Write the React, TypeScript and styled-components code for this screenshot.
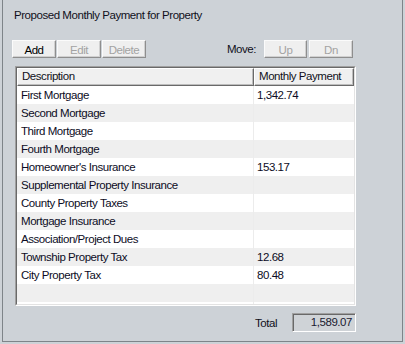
import React from "react";
import styled, { createGlobalStyle } from "styled-components";

const Global = createGlobalStyle`
  html, body { margin: 0; padding: 0; background: #cdd2d7; }
  body { font-family: "Liberation Sans", Arial, sans-serif; font-size: 11.5px; letter-spacing: -0.45px; color: #111; }
  * { box-sizing: border-box; }
`;

const Frame = styled.div`
  margin-left: 2px;
  width: 401px;
  height: 342px;
  border: 1px solid #7e8489;
  border-top: none;
  background: #cdd2d7;
  padding-left: 9px;
  display: flex;
  flex-direction: column;
`;

const Title = styled.div`
  margin-top: 8px;
  padding-left: 2px;
  line-height: 14px;
  color: #101020;
`;

const Toolbar = styled.div`
  margin-top: 18px;
  width: 341px;
  display: flex;
  justify-content: space-between;
  align-items: center;
`;

const Group = styled.div<{ $gap: number }>`
  display: flex;
  align-items: center;
  gap: ${(p) => p.$gap}px;
`;

const Button = styled.button<{ $w?: number }>`
  width: ${(p) => p.$w ?? 44}px;
  height: 18px;
  padding: 1px 0 0;
  margin: 0;
  font: inherit;
  letter-spacing: inherit;
  background: #efefef;
  border: 1px solid;
  border-color: #fbfbfb #8e8e8e #8e8e8e #fbfbfb;
  box-shadow: inset -1px -1px 0 #d0d0d0;
  color: ${(p) => (p.disabled ? "#a3a3a3" : "#000")};
  line-height: 14px;
`;

const MoveLabel = styled.span`
  color: #101020;
  margin-right: 6px;
`;

const TableOuter = styled.div`
  margin-top: 8px;
  margin-left: 3px;
  width: 341px;
  height: 240px;
  border: 1px solid;
  border-color: #a0a0a0 #ffffff #ffffff #a0a0a0;
`;

const TableInner = styled.div`
  width: 100%;
  height: 100%;
  border: 1px solid;
  border-color: #696969 #e3e3e3 #e3e3e3 #696969;
  background: #fff;
  overflow: hidden;
`;

const HeaderRow = styled.div`
  display: grid;
  grid-template-columns: 237px 100px;
  height: 18px;
`;

const HeaderCell = styled.div`
  background: #f0f0f0;
  border-top: 1px solid #ffffff;
  border-left: 1px solid #ffffff;
  border-right: 1px solid #696969;
  border-bottom: 1px solid #696969;
  box-shadow: inset -1px -1px 0 #bdbdbd;
  padding-left: 4px;
  line-height: 15px;
  color: #101020;
`;

const Body = styled.div`
  height: 218px;
  overflow: hidden;
`;

const Row = styled.div<{ $alt: boolean }>`
  display: grid;
  grid-template-columns: 237px 100px;
  height: 18px;
  background: ${(p) => (p.$alt ? "#efefef" : "#ffffff")};
`;

const Cell = styled.div<{ $first?: boolean }>`
  line-height: 18px;
  padding-left: ${(p) => (p.$first ? 4 : 3)}px;
  border-right: ${(p) => (p.$first ? "1px solid #ececec" : "none")};
  color: #0c0c24;
  white-space: nowrap;
`;

const Footer = styled.div`
  margin-top: 7px;
  width: 344px;
  display: flex;
  justify-content: flex-end;
  align-items: center;
  gap: 15px;
`;

const TotalLabel = styled.span`
  color: #101020;
`;

const TotalBox = styled.div`
  width: 64px;
  height: 19px;
  border: 1px solid;
  border-color: #a0a0a0 #ffffff #ffffff #a0a0a0;
  box-shadow: inset 1px 1px 0 #696969;
  background: #cfd3d7;
  text-align: right;
  padding-right: 3px;
  line-height: 17px;
  color: #1a1a30;
`;

const rows: [string, string][] = [
  ["First Mortgage", "1,342.74"],
  ["Second Mortgage", ""],
  ["Third Mortgage", ""],
  ["Fourth Mortgage", ""],
  ["Homeowner's Insurance", "153.17"],
  ["Supplemental Property Insurance", ""],
  ["County Property Taxes", ""],
  ["Mortgage Insurance", ""],
  ["Association/Project Dues", ""],
  ["Township Property Tax", "12.68"],
  ["City Property Tax", "80.48"],
  ["", ""],
  ["", ""],
];

export default function App() {
  return (
    <>
      <Global />
      <Frame>
        <Title>Proposed Monthly Payment for Property</Title>
        <Toolbar>
          <Group $gap={1}>
            <Button>Add</Button>
            <Button disabled>Edit</Button>
            <Button disabled>Delete</Button>
          </Group>
          <Group $gap={2}>
            <MoveLabel>Move:</MoveLabel>
            <Button $w={43} disabled>Up</Button>
            <Button $w={44} disabled>Dn</Button>
          </Group>
        </Toolbar>
        <TableOuter>
          <TableInner>
            <HeaderRow>
              <HeaderCell>Description</HeaderCell>
              <HeaderCell>Monthly Payment</HeaderCell>
            </HeaderRow>
            <Body>
              {rows.map(([d, v], i) => (
                <Row key={i} $alt={i % 2 === 1}>
                  <Cell $first>{d}</Cell>
                  <Cell>{v}</Cell>
                </Row>
              ))}
            </Body>
          </TableInner>
        </TableOuter>
        <Footer>
          <TotalLabel>Total</TotalLabel>
          <TotalBox>1,589.07</TotalBox>
        </Footer>
      </Frame>
    </>
  );
}
